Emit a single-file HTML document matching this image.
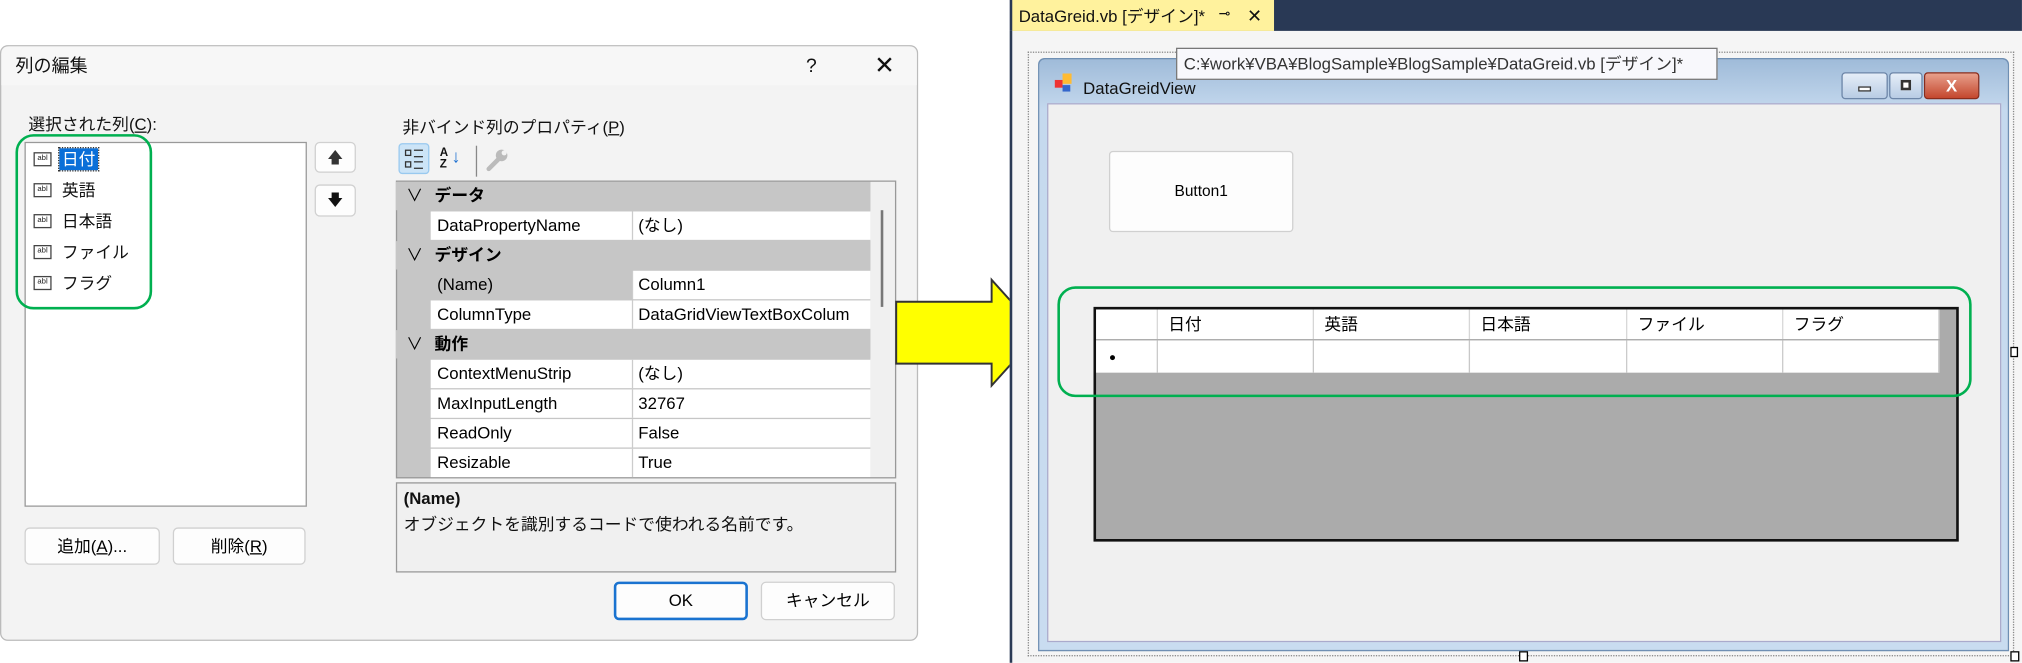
<!DOCTYPE html>
<html><head><meta charset="utf-8"><style>
*{box-sizing:border-box;margin:0;padding:0}
body{width:2022px;height:663px;background:#fff;overflow:hidden;font-family:"Liberation Sans","Noto Sans CJK JP",sans-serif;}
#w{position:absolute;left:0;top:0;width:1568px;height:514px;transform:scale(1.2895);transform-origin:0 0;}
.a{position:absolute}
.t{position:absolute;font-size:13px;color:#111;white-space:nowrap;line-height:1}
.ic{position:absolute;width:14px;height:11px;border:1px solid #444;font-size:6px;line-height:9px;text-align:center;background:#fff;color:#222}
.row{position:absolute;left:334px;width:341px;height:22px;background:#fff;font-size:13px;line-height:22px}
.row span{position:absolute;left:5px}
.row b{position:absolute;left:156px;top:0;width:1px;height:22px;background:#ccc}
.row i{font-style:normal;position:absolute;left:161px}
.cat{position:absolute;left:307px;width:368px;height:22px;background:#c6c6c6;font-size:13px;font-weight:bold;line-height:22px}
.btn{position:absolute;background:#fdfdfd;border:1px solid #d0d0d0;border-radius:4px;font-size:13px;text-align:center}
.hc{position:absolute;top:0;height:23px;border-right:1px solid #d6d6d6;font-size:13px;line-height:23px;padding-left:8px;background:#fff}
.rc{position:absolute;top:24px;height:25px;border-right:1px solid #c8c8c8;background:#fff}
</style></head><body><div id="w">
<div class="a" style="left:0;top:35px;width:712px;height:462px;background:#f3f3f3;border:1px solid #bbb;border-radius:6px;"></div>
<div class="a" style="left:1px;top:36px;width:710px;height:30px;background:#f7f7f7;border-radius:6px 6px 0 0"></div>
<div class="t" style="left:12px;top:44px;font-size:14px">列の編集</div>
<div class="t" style="left:625px;top:44px;font-size:15px">?</div>
<div class="t" style="left:678px;top:42px;font-size:19px;font-weight:300">✕</div>
<div class="t" style="left:22px;top:90px">選択された列(<u>C</u>):</div>
<div class="a" style="left:19px;top:110px;width:219px;height:283px;background:#fff;border:1px solid #999"></div>
<div class="ic" style="left:26px;top:118px">abl</div><div class="t" style="left:46px;top:115px;background:#0a6fd8;color:#fff;padding:2px 2px;outline:1px dotted #333">日付</div>
<div class="ic" style="left:26px;top:142px">abl</div><div class="t" style="left:48px;top:141px">英語</div>
<div class="ic" style="left:26px;top:166px">abl</div><div class="t" style="left:48px;top:165px">日本語</div>
<div class="ic" style="left:26px;top:190px">abl</div><div class="t" style="left:48px;top:189px">ファイル</div>
<div class="ic" style="left:26px;top:214px">abl</div><div class="t" style="left:48px;top:213px">フラグ</div>
<div class="a" style="left:12px;top:104px;width:106px;height:136px;border:2px solid #00b050;border-radius:14px"></div>
<div class="btn" style="left:244px;top:110px;width:32px;height:24px;line-height:22px;font-size:12px;color:#333">🡅</div>
<div class="btn" style="left:244px;top:143px;width:32px;height:25px;line-height:23px;font-size:12px;color:#111">🡇</div>
<div class="t" style="left:312px;top:92px">非バインド列のプロパティ(<u>P</u>)</div>
<div class="a" style="left:309px;top:111px;width:24px;height:24px;background:#cce4f7;border:1px solid #99c9ef;border-radius:3px"></div>
<div class="a" style="left:314px;top:116px;width:5px;height:5px;border:1px solid #333"></div>
<div class="a" style="left:314px;top:125px;width:5px;height:5px;border:1px solid #333"></div>
<div class="a" style="left:321px;top:116px;width:7px;height:6px;border-top:1px solid #333;border-bottom:1px solid #333"></div>
<div class="a" style="left:321px;top:125px;width:7px;height:6px;border-top:1px solid #333;border-bottom:1px solid #333"></div>
<div class="t" style="left:341px;top:114px;font-size:9px;font-weight:bold;line-height:9px">A<br>Z</div>
<div class="t" style="left:350px;top:114px;font-size:14px;color:#1b6fd0;font-weight:bold">↓</div>
<div class="a" style="left:369px;top:113px;width:1px;height:24px;background:#888"></div>
<svg class="a" style="left:376px;top:114px" width="20" height="20"><path d="M3 17 L11 9" stroke="#bbb" stroke-width="3.5" stroke-linecap="round"/><circle cx="13" cy="6.5" r="4.5" fill="#bbb"/><circle cx="15" cy="4.5" r="2" fill="#f3f3f3"/></svg>
<div class="a" style="left:307px;top:140px;width:388px;height:231px;background:#c6c6c6;border:1px solid #999"></div>
<div class="a" style="left:675px;top:141px;width:19px;height:229px;background:#f0f0f0"></div>
<div class="a" style="left:683px;top:163px;width:2px;height:75px;background:#777"></div>
<div class="cat" style="top:141px"><span style="position:absolute;left:8px;font-weight:normal">∨</span><span style="position:absolute;left:30px">データ</span></div>
<div class="row" style="top:164px"><span>DataPropertyName</span><b></b><i>(なし)</i></div>
<div class="cat" style="top:187px"><span style="position:absolute;left:8px;font-weight:normal">∨</span><span style="position:absolute;left:30px">デザイン</span></div>
<div class="row" style="top:210px;background:#c6c6c6"><span>(Name)</span><b></b><i style="background:#fff;left:157px;padding-left:4px;width:184px">Column1</i></div>
<div class="row" style="top:233px"><span>ColumnType</span><b></b><i>DataGridViewTextBoxColum</i></div>
<div class="cat" style="top:256px"><span style="position:absolute;left:8px;font-weight:normal">∨</span><span style="position:absolute;left:30px">動作</span></div>
<div class="row" style="top:279px"><span>ContextMenuStrip</span><b></b><i>(なし)</i></div>
<div class="row" style="top:302px"><span>MaxInputLength</span><b></b><i>32767</i></div>
<div class="row" style="top:325px"><span>ReadOnly</span><b></b><i>False</i></div>
<div class="row" style="top:348px"><span>Resizable</span><b></b><i>True</i></div>
<div class="a" style="left:307px;top:374px;width:388px;height:70px;background:#f0f0f0;border:1px solid #999"></div>
<div class="t" style="left:313px;top:380px;font-weight:bold">(Name)</div>
<div class="t" style="left:313px;top:400px">オブジェクトを識別するコードで使われる名前です。</div>
<div class="btn" style="left:19px;top:409px;width:105px;height:29px;line-height:27px">追加(<u>A</u>)...</div>
<div class="btn" style="left:134px;top:409px;width:103px;height:29px;line-height:27px">削除(<u>R</u>)</div>
<div class="btn" style="left:476px;top:451px;width:104px;height:30px;line-height:26px;border:2px solid #1a73d0">OK</div>
<div class="btn" style="left:590px;top:451px;width:104px;height:30px;line-height:28px">キャンセル</div>
<svg class="a" style="left:690px;top:214px" width="120" height="90"><polygon points="5,20 79,20 79,3 116,44 79,85 79,68 5,68" fill="#ffff00" stroke="#333" stroke-width="1.5"/></svg>
<div class="a" style="left:783px;top:0;width:785px;height:24px;background:#293955"></div>
<div class="a" style="left:783px;top:24px;width:785px;height:490px;background:#f5f5f5;border-left:2px solid #2b3a55"></div>
<div class="a" style="left:785px;top:0;width:203px;height:24px;background:#fff29d"></div>
<div class="t" style="left:790px;top:6px;font-size:13px">DataGreid.vb [デザイン]*</div>
<div class="t" style="left:945px;top:6px;font-size:11px">⊸</div>
<div class="t" style="left:967px;top:5px;font-size:14px">✕</div>
<div class="a" style="left:797px;top:40px;width:765px;height:469px;border:1px dotted #888"></div>
<div class="a" style="left:805px;top:45px;width:753px;height:460px;background:linear-gradient(#9fbbd9,#c5d9ee 40px,#c9dcf0);border:1px solid #6f8fb3;border-radius:5px 5px 0 0"></div>
<div class="a" style="left:812px;top:80px;width:740px;height:418px;background:#f0f0f0;border:1px solid #aac"></div>
<div class="a" style="left:818px;top:62px;width:6px;height:6px;background:#e33"></div>
<div class="a" style="left:824px;top:57px;width:7px;height:8px;background:#fb3"></div>
<div class="a" style="left:824px;top:66px;width:6px;height:5px;background:#36c"></div>
<div class="t" style="left:840px;top:62px;font-size:13px">DataGreidView</div>
<div class="a" style="left:1428px;top:56px;width:36px;height:21px;background:linear-gradient(#e6eef8,#b8cce4);border:1px solid #6d86a8;border-radius:3px"></div>
<div class="a" style="left:1441px;top:67px;width:10px;height:4px;border:1px solid #333;background:#fff"></div>
<div class="a" style="left:1465px;top:56px;width:26px;height:21px;background:linear-gradient(#e6eef8,#b8cce4);border:1px solid #6d86a8;border-radius:3px"></div>
<div class="a" style="left:1474px;top:62px;width:8px;height:8px;border:2px solid #333;background:#fff"></div>
<div class="a" style="left:1492px;top:56px;width:43px;height:21px;background:linear-gradient(#e8a08c,#c4472e);border:1px solid #8a2c1c;border-radius:3px;color:#fff;font-weight:bold;font-size:13px;text-align:center;line-height:19px">X</div>
<div class="a" style="left:912px;top:37px;width:420px;height:25px;background:#f8f8fc;border:1px solid #777"></div>
<div class="t" style="left:918px;top:43px;color:#333">C:¥work¥VBA¥BlogSample¥BlogSample¥DataGreid.vb [デザイン]*</div>
<div class="btn" style="left:860px;top:117px;width:143px;height:63px;line-height:61px;font-size:12px;border-radius:3px">Button1</div>
<div class="a" style="left:848px;top:238px;width:671px;height:182px;background:#ababab;border:2px solid #111"></div>
<div class="a" style="left:850px;top:240px;width:654px;height:49px">
<div class="hc" style="left:0;width:48px"></div>
<div class="hc" style="left:48px;width:121px">日付</div>
<div class="hc" style="left:169px;width:121px">英語</div>
<div class="hc" style="left:290px;width:122px">日本語</div>
<div class="hc" style="left:412px;width:121px">ファイル</div>
<div class="hc" style="left:533px;width:121px">フラグ</div>
<div class="a" style="left:0;top:23px;width:654px;height:1px;background:#aaa"></div>
<div class="rc" style="left:0;width:48px;font-size:9px;padding:8px 0 0 10px">●</div>
<div class="rc" style="left:48px;width:121px"></div>
<div class="rc" style="left:169px;width:121px"></div>
<div class="rc" style="left:290px;width:122px"></div>
<div class="rc" style="left:412px;width:121px"></div>
<div class="rc" style="left:533px;width:121px"></div>
</div>
<div class="a" style="left:820px;top:222px;width:709px;height:86px;border:2px solid #00b050;border-radius:14px"></div>
<div class="a" style="left:1559px;top:269px;width:6px;height:8px;border:1px solid #000;background:#fff"></div>
<div class="a" style="left:1178px;top:505px;width:7px;height:8px;border:1px solid #000;background:#fff"></div>
<div class="a" style="left:1559px;top:505px;width:7px;height:8px;border:1px solid #000;background:#fff"></div>
</div></body></html>
